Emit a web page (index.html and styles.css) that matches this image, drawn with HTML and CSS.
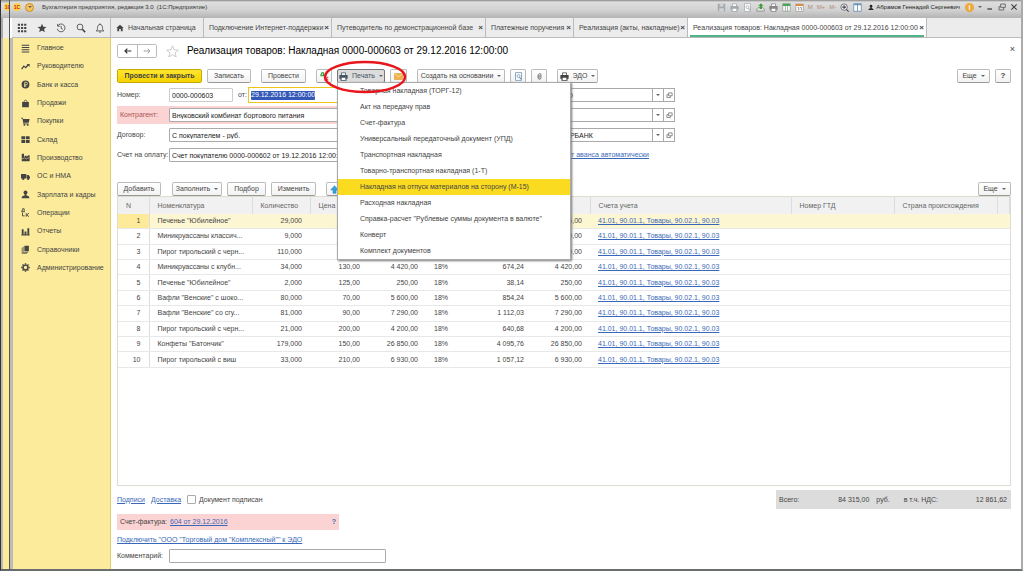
FILE: index.html
```html
<!DOCTYPE html>
<html lang="ru">
<head>
    <meta charset="UTF-8">
    <title>Бухгалтерия предприятия, редакция 3.0</title>
    <link rel="stylesheet" href="styles.css">
</head>
<body>
    <!-- иконки -->
    <svg class="sprite" width="0" height="0">
        <symbol id="i-grid" viewBox="0 0 12 12"><path d="M1 1h2.6v2.4H1zM4.8 1h2.6v2.4H4.800zM8.600 1h2.600v2.400H8.600zM1 4.800h2.600v2.400H1zM4.800 4.800h2.600v2.400H4.800zM8.600 4.800h2.600v2.400H8.600zM1 8.600h2.600V11H1zM4.800 8.600h2.600V11H4.800zM8.600 8.600h2.600V11H8.600z"/></symbol>
        <symbol id="i-star" viewBox="0 0 12 12"><path d="M6 .8l1.500 3.600 3.900.3-3 2.500 1 3.800L6 9l-3.400 2 1-3.800-3-2.500 3.900-.3z"/></symbol>
        <symbol id="i-history" viewBox="0 0 12 12"><path d="M2 3.500A4.700 4.700 0 1 1 1.500 7M2 1v2.800h2.600M6.200 3.500v3l2 1" fill="none" stroke="currentColor"/></symbol>
        <symbol id="i-search" viewBox="0 0 12 12"><circle cx="4.800" cy="4.800" r="3.500" fill="none" stroke="currentColor"/><path d="M7.500 7.500l3.500 3.500" stroke="currentColor" stroke-width="2"/></symbol>
        <symbol id="i-bell" viewBox="0 0 12 12"><path d="M1.500 9.500c1.500-1 1.500-2 1.500-4 0-5 6-5 6 0 0 2 0 3 1.500 4zM4.800 10.500q1.200 1.500 2.400 0M6 .5V2" fill="none" stroke="currentColor"/></symbol>
        <symbol id="i-home" viewBox="0 0 12 12"><path d="M6 1l5.500 5H10v5H7.300V7.500H4.700V11H2V6H.5z"/></symbol>
        <symbol id="i-list" viewBox="0 0 12 12"><path d="M1 1h10v1.200H1zM1 4h10v1.200H1zM1 7h10v1.200H1zM1 10h10v1.200H1z"/></symbol>
        <symbol id="i-trend" viewBox="0 0 12 12"><path d="M.8 9.500l3-4 2.500 2 3-3.500" fill="none" stroke="currentColor" stroke-width="1.700"/><path d="M7.500 2.500h4v4z"/></symbol>
        <symbol id="i-coin" viewBox="0 0 12 12"><circle cx="6" cy="6" r="5.200"/><path d="M5 9.500V3h1.800a1.700 1.700 0 0 1 0 3.500H4M4 8h3" fill="none" stroke="#fbeb9b"/></symbol>
        <symbol id="i-bag" viewBox="0 0 12 12"><path d="M1.500 4h9v7h-9z"/><path d="M4 5.500V2.800q2-2.600 4 0v2.700" fill="none" stroke="currentColor"/></symbol>
        <symbol id="i-cart" viewBox="0 0 12 12"><path d="M0 1h2.500l.5 1.500h8.500L10.300 7.500H4.200L4.400 8.500H10v1H3.500L1.800 2H0z"/><circle cx="4.500" cy="10.600" r="1.200"/><circle cx="9" cy="10.600" r="1.200"/></symbol>
        <symbol id="i-boxes" viewBox="0 0 12 12"><path d="M.5 1.500h5v4h-5zM6.500 1.500h5v4h-5zM.5 6.500h5v4h-5zM6.500 6.500h5v4h-5z"/></symbol>
        <symbol id="i-factory" viewBox="0 0 12 12"><path d="M1 1h3v4l3-2v2l3-2h1.500v8H1z"/><path d="M1 8l4-1.500 2 1.500 4-2" fill="none" stroke="#fbeb9b" stroke-width=".7"/></symbol>
        <symbol id="i-truck" viewBox="0 0 12 12"><path d="M0 2.500h7v6H0zM7.600 4H10l2 2.500v2H7.600z"/><circle cx="3" cy="9.300" r="1.500"/><circle cx="9.500" cy="9.300" r="1.500"/></symbol>
        <symbol id="i-person" viewBox="0 0 12 12"><circle cx="6" cy="3.300" r="2.600"/><path d="M4.800 5h2.400v2.300q4 .3 4 3.700H.8q0-3.400 4-3.700z"/></symbol>
        <symbol id="i-ops" viewBox="0 0 12 12"><path d="M1 5l1.200-4h2v4M.5 5h4.500M7 7v4.500M10.500 7L7.500 9.200l3 2.300M2 6.500v4h3" fill="none" stroke="currentColor" stroke-width="1.200"/></symbol>
        <symbol id="i-chart" viewBox="0 0 12 12"><path d="M1 3h2.500v8H1zM4.700 6h2.500v5H4.700zM8.500 1.500H11V11H8.500zM.5 10h11v1.200H.5z"/></symbol>
        <symbol id="i-books" viewBox="0 0 12 12"><path d="M4.500 1h6v7.500h-6z"/><path d="M3 2.300v7.700h6.300M1.500 3.600v7.900H8" fill="none" stroke="currentColor" stroke-width=".9"/></symbol>
        <symbol id="i-gear" viewBox="0 0 12 12"><circle cx="6" cy="6" r="3.200" fill="none" stroke="currentColor" stroke-width="1.900"/><path d="M6 .3v2M6 9.700v2M.3 6h2M9.700 6h2M2 2l1.400 1.400M8.600 8.600L10 10M2 10l1.400-1.400M8.600 3.400L10 2" stroke="currentColor" stroke-width="1.900"/></symbol>
        <symbol id="i-print" viewBox="0 0 12 12"><path d="M3 .8h6V4h2.500v5H10v2.500H2V9H.5V4H3z"/><path d="M4 1.800h4V4H4zM3.500 7.500h5v3h-5z" fill="#fff"/></symbol>
        <symbol id="i-open" viewBox="0 0 12 12"><path d="M4.500 1.500h6v5h-6zM4 4.500H1.500v5h6V7" fill="none" stroke="currentColor"/></symbol>
        <symbol id="i-disk" viewBox="0 0 12 12"><path d="M1 1h10v10H1z"/><path d="M3.500 1h5v3.500h-5zM3 7h6v4H3z" fill="#cfd3d6"/></symbol>
        <symbol id="i-preview" viewBox="0 0 12 12"><path d="M2 .8h8v10.400H2z" fill="#fff" stroke="currentColor"/><circle cx="6" cy="5.500" r="2" fill="none" stroke="currentColor"/><path d="M7.300 7l2 2.500" stroke="currentColor" stroke-width="1.500"/></symbol>
        <symbol id="i-calendar" viewBox="0 0 12 12"><path d="M1 1.500h10V11H1z" fill="#fff" stroke="#999"/><path d="M1 1.500h10V4H1z" fill="#d98a3d"/><path d="M3.500 6H5v3.500M7 6h1.500v3.500" fill="none" stroke="#777"/></symbol>
        <symbol id="i-calc" viewBox="0 0 12 12"><path d="M1 1h10v10H1z" fill="#fff" stroke="#8b9b8b"/><path d="M1 1h10v3H1z" fill="#4aa657"/><path d="M4.500 4v7M7.500 4v7" stroke="#8b9b8b"/></symbol>
        <symbol id="i-zoom" viewBox="0 0 12 12"><circle cx="5.500" cy="5.500" r="4.300" fill="#eef" stroke="#555"/><path d="M5.500 3v5M3 5.500h5M8.500 8.500l3 3" stroke="#444" stroke-width="1.400"/></symbol>
        <symbol id="i-panels" viewBox="0 0 12 12"><path d="M1 1h10v10H1z" fill="#fff" stroke="#5c86a8"/><path d="M1 1h10v2H1z" fill="#6b9bc2"/><path d="M6 1v10" stroke="#5c86a8"/></symbol>
        <symbol id="i-send" viewBox="0 0 12 12"><path d="M1 8l2-2h6l2 2v3H1z" fill="#ddd" stroke="#888"/><path d="M5 8V4H3l3.500-3.800L10 4H8v4z" fill="#40a03c"/></symbol>
        <symbol id="i-clip" viewBox="0 0 12 12"><path d="M4 3.500v5q2 3 4 0V3q-1.500-2.500-3 0v4.500q1 1.500 1.700 0V3.500" fill="none" stroke="currentColor" stroke-width=".8"/></symbol>
    </svg>

    <!-- край окна, лежащего позади -->
    <div class="back-window">
        <div class="back-title"><span class="logo">1С</span></div>
        <div class="back-tabs"></div>
        <div class="back-side"></div>
    </div>

    <div class="window">
        <header class="titlebar">
            <span class="logo">1С</span>
            <button class="round" aria-label="Меню"><span class="caret"></span></button>
            <span class="app-title">Бухгалтерия предприятия, редакция 3.0 &nbsp;(1С:Предприятие)</span>
            <div class="title-tools">
                <svg class="pale"><use href="#i-disk"/></svg>
                <svg class="pale"><use href="#i-print"/></svg>
                <svg class="pale"><use href="#i-preview"/></svg>
                <svg><use href="#i-send"/></svg>
                <svg class="dim"><use href="#i-print"/></svg>
                <svg><use href="#i-calc"/></svg>
                <svg><use href="#i-calendar"/></svg>
                <span class="mem">M</span><span class="mem">M+</span><span class="mem">M-</span>
                <svg><use href="#i-zoom"/></svg>
                <svg><use href="#i-panels"/></svg>
            </div>
            <span class="user"><svg><use href="#i-person"/></svg>Абрамов Геннадий Сергеевич</span>
            <div class="win-buttons">
                <span class="info">i</span>
                <span class="caret"></span>
                <svg viewBox="0 0 12 12"><path d="M2 9h7" stroke="#444" stroke-width="2"/></svg>
                <svg viewBox="0 0 12 12"><path d="M4 1.500h7v5H4zM8.500 6.500v4h-7v-5H4" fill="none" stroke="#555" stroke-width="1.200"/></svg>
                <svg viewBox="0 0 12 12"><path d="M2 2l8 8M10 2l-8 8" stroke="#444" stroke-width="1.800"/></svg>
            </div>
        </header>

        <nav class="tabbar">
            <div class="tab-tools">
                <svg><use href="#i-grid"/></svg>
                <svg><use href="#i-star"/></svg>
                <svg><use href="#i-history"/></svg>
                <svg><use href="#i-search"/></svg>
                <svg><use href="#i-bell"/></svg>
            </div>
            <a href="#" class="tab home"><svg><use href="#i-home"/></svg>Начальная страница</a>
            <a href="#" class="tab t1">Подключение Интернет-поддержки<b>×</b></a>
            <a href="#" class="tab t2">Путеводитель по демонстрационной базе<b>×</b></a>
            <a href="#" class="tab t3">Платежные поручения<b>×</b></a>
            <a href="#" class="tab t4">Реализация (акты, накладные)<b>×</b></a>
            <a href="#" class="tab t5 active">Реализация товаров: Накладная 0000-000603 от 29.12.2016 12:00:00<b>×</b></a>
        </nav>

        <div class="main">
            <nav class="sidebar">
                <a href="#"><svg><use href="#i-list"/></svg>Главное</a>
                <a href="#"><svg><use href="#i-trend"/></svg>Руководителю</a>
                <a href="#"><svg><use href="#i-coin"/></svg>Банк и касса</a>
                <a href="#"><svg><use href="#i-bag"/></svg>Продажи</a>
                <a href="#"><svg><use href="#i-cart"/></svg>Покупки</a>
                <a href="#"><svg><use href="#i-boxes"/></svg>Склад</a>
                <a href="#"><svg><use href="#i-factory"/></svg>Производство</a>
                <a href="#"><svg><use href="#i-truck"/></svg>ОС и НМА</a>
                <a href="#"><svg><use href="#i-person"/></svg>Зарплата и кадры</a>
                <a href="#"><svg><use href="#i-ops"/></svg>Операции</a>
                <a href="#"><svg><use href="#i-chart"/></svg>Отчеты</a>
                <a href="#"><svg><use href="#i-books"/></svg>Справочники</a>
                <a href="#"><svg><use href="#i-gear"/></svg>Администрирование</a>
            </nav>

            <main class="doc">
                <div class="doc-head">
                    <div class="nav-pair">
                        <button aria-label="Назад"><svg viewBox="0 0 12 12"><path d="M11 6H2M5 2.500L1.500 6 5 9.500" fill="none" stroke="#333" stroke-width="1.800"/></svg></button>
                        <button aria-label="Вперед"><svg viewBox="0 0 12 12"><path d="M1 6h9M7 2.500L10.500 6 7 9.500" fill="none" stroke="#999" stroke-width="1.400"/></svg></button>
                    </div>
                    <svg class="fav" viewBox="0 0 12 12"><path d="M6 .8l1.500 3.600 3.900.3-3 2.500 1 3.800L6 9l-3.400 2 1-3.800-3-2.500 3.900-.3z" fill="#fff" stroke="#bbb" stroke-width=".7"/></svg>
                    <h1>Реализация товаров: Накладная 0000-000603 от 29.12.2016 12:00:00</h1>
                    <button class="close" aria-label="Закрыть">×</button>
                </div>

                <div class="toolbar">
                    <button class="btn primary">Провести и закрыть</button>
                    <button class="btn w-save">Записать</button>
                    <button class="btn w-post">Провести</button>
                    <button class="btn icon" aria-label="Дт/Кт"><svg viewBox="0 0 12 12"><path d="M1 5l1.500-4h2v4M.5 5h5" fill="none" stroke="#2a9a35" stroke-width="1.500"/><path d="M7 6v5.500M11 6.500L8 8.700l3 2.500" fill="none" stroke="#e0403a" stroke-width="1.500"/></svg></button>
                    <div class="print">
                        <button class="btn pressed"><svg><use href="#i-print"/></svg>Печать<span class="caret"></span></button>
                        <ul class="menu">
                            <li>Товарная накладная (ТОРГ-12)</li>
                            <li>Акт на передачу прав</li>
                            <li>Счет-фактура</li>
                            <li>Универсальный передаточный документ (УПД)</li>
                            <li>Транспортная накладная</li>
                            <li>Товарно-транспортная накладная (1-Т)</li>
                            <li class="selected">Накладная на отпуск материалов на сторону (М-15)</li>
                            <li>Расходная накладная</li>
                            <li>Справка-расчет "Рублевые суммы документа в валюте"</li>
                            <li>Конверт</li>
                            <li>Комплект документов</li>
                        </ul>
                        <svg class="mark" viewBox="0 0 84 34"><ellipse cx="42" cy="17" rx="40" ry="15"/></svg>
                    </div>
                    <button class="btn icon mail" aria-label="Отправить"><svg viewBox="0 0 12 12"><path d="M.5 2h11v8H.5z" fill="#f0b043" stroke="#c98a22" stroke-width=".6"/><path d="M.5 2L6 6.500 11.500 2" fill="none" stroke="#fff2c8"/></svg></button>
                    <button class="btn w-create">Создать на основании<span class="caret"></span></button>
                    <button class="btn icon" aria-label="Просмотр"><svg class="blue"><use href="#i-preview"/></svg></button>
                    <button class="btn icon" aria-label="Файлы"><svg><use href="#i-clip"/></svg></button>
                    <button class="btn w-edo"><svg><use href="#i-print"/></svg>ЭДО<span class="caret"></span></button>
                    <button class="btn more">Еще<span class="caret"></span></button>
                    <button class="btn icon help">?</button>
                </div>

                <form class="fields">
                    <div class="row">
                        <label for="num">Номер:</label>
                        <input id="num" class="num" value="0000-000603">
                        <label for="date" class="from">от:</label>
                        <span class="date-box"><input id="date" class="date" value="29.12.2016 12:00:00"></span>
                        <label for="org" class="second">Организация:</label>
                        <span class="pick"><input id="org" value="Торговый дом Комплексный, АО"><button type="button" aria-label="Список"><i class="caret"></i></button><button type="button" aria-label="Открыть"><svg><use href="#i-open"/></svg></button></span>
                    </div>
                    <div class="row">
                        <div class="required"><label for="agent">Контрагент:</label><input id="agent" value="Внуковский комбинат бортового питания"></div>
                        <label for="store" class="second">Склад:</label>
                        <span class="pick"><input id="store" value="Основной склад"><button type="button" aria-label="Список"><i class="caret"></i></button><button type="button" aria-label="Открыть"><svg><use href="#i-open"/></svg></button></span>
                    </div>
                    <div class="row">
                        <label for="deal">Договор:</label>
                        <input id="deal" class="wide" value="С покупателем - руб.">
                        <label for="bank" class="second">Банковский счет:</label>
                        <span class="pick"><input id="bank" value="Расчетный счет, банк ПАО СБЕРБАНК"><button type="button" aria-label="Список"><i class="caret"></i></button><button type="button" aria-label="Открыть"><svg><use href="#i-open"/></svg></button></span>
                    </div>
                    <div class="row">
                        <label for="bill">Счет на оплату:</label>
                        <input id="bill" class="wide" value="Счет покупателю 0000-000602 от 19.12.2016 12:00:00">
                        <span class="second">Расчеты:</span>
                        <a href="#">Срок 31.12.16, 62.01, 62.02, зачет аванса автоматически</a>
                    </div>
                </form>

                <div class="toolbar table-tools">
                    <button class="btn w-add">Добавить</button>
                    <button class="btn w-fill">Заполнить<span class="caret"></span></button>
                    <button class="btn w-pick">Подбор</button>
                    <button class="btn w-edit">Изменить</button>
                    <button class="btn icon up" aria-label="Вверх"><svg viewBox="0 0 12 12"><path d="M6 1l5 5.500H8V11H4V6.500H1z" fill="#36a3e0" stroke="#1b78b5" stroke-width=".7"/></svg></button>
                    <button class="btn more">Еще<span class="caret"></span></button>
                </div>

                <div class="table-box">
                    <table>
                        <colgroup>
                            <col class="c-n"><col class="c-item"><col class="c-num"><col class="c-num"><col class="c-num"><col class="c-rate"><col class="c-num"><col class="c-num"><col class="c-acc"><col class="c-gtd"><col class="c-gtd"><col>
                        </colgroup>
                        <thead>
                            <tr><th>N</th><th>Номенклатура</th><th>Количество</th><th>Цена</th><th>Сумма</th><th>% НДС</th><th>НДС</th><th>Всего</th><th>Счета учета</th><th>Номер ГТД</th><th>Страна происхождения</th><th></th></tr>
                        </thead>
                        <tbody>
                            <tr class="current"><td>1</td><td>Печенье "Юбилейное"</td><td>29,000</td><td>75,00</td><td>2 175,00</td><td>18%</td><td>331,78</td><td>2 175,00</td><td><a href="#">41.01, 90.01.1, Товары, 90.02.1, 90.03</a></td><td></td><td></td><td></td></tr>
                            <tr><td>2</td><td>Миникруассаны классич...</td><td>9,000</td><td>450,00</td><td>4 050,00</td><td>18%</td><td>617,80</td><td>4 050,00</td><td><a href="#">41.01, 90.01.1, Товары, 90.02.1, 90.03</a></td><td></td><td></td><td></td></tr>
                            <tr><td>3</td><td>Пирог тирольский с черн...</td><td>110,000</td><td>205,00</td><td>22 550,00</td><td>18%</td><td>3 439,83</td><td>22 550,00</td><td><a href="#">41.01, 90.01.1, Товары, 90.02.1, 90.03</a></td><td></td><td></td><td></td></tr>
                            <tr><td>4</td><td>Миникруассаны с клубн...</td><td>34,000</td><td>130,00</td><td>4 420,00</td><td>18%</td><td>674,24</td><td>4 420,00</td><td><a href="#">41.01, 90.01.1, Товары, 90.02.1, 90.03</a></td><td></td><td></td><td></td></tr>
                            <tr><td>5</td><td>Печенье "Юбилейное"</td><td>2,000</td><td>125,00</td><td>250,00</td><td>18%</td><td>38,14</td><td>250,00</td><td><a href="#">41.01, 90.01.1, Товары, 90.02.1, 90.03</a></td><td></td><td></td><td></td></tr>
                            <tr><td>6</td><td>Вафли "Венские" с шоко...</td><td>80,000</td><td>70,00</td><td>5 600,00</td><td>18%</td><td>854,24</td><td>5 600,00</td><td><a href="#">41.01, 90.01.1, Товары, 90.02.1, 90.03</a></td><td></td><td></td><td></td></tr>
                            <tr><td>7</td><td>Вафли "Венские" со сгу...</td><td>81,000</td><td>90,00</td><td>7 290,00</td><td>18%</td><td>1 112,03</td><td>7 290,00</td><td><a href="#">41.01, 90.01.1, Товары, 90.02.1, 90.03</a></td><td></td><td></td><td></td></tr>
                            <tr><td>8</td><td>Пирог тирольский с черн...</td><td>21,000</td><td>200,00</td><td>4 200,00</td><td>18%</td><td>640,68</td><td>4 200,00</td><td><a href="#">41.01, 90.01.1, Товары, 90.02.1, 90.03</a></td><td></td><td></td><td></td></tr>
                            <tr><td>9</td><td>Конфеты "Батончик"</td><td>179,000</td><td>150,00</td><td>26 850,00</td><td>18%</td><td>4 095,76</td><td>26 850,00</td><td><a href="#">41.01, 90.01.1, Товары, 90.02.1, 90.03</a></td><td></td><td></td><td></td></tr>
                            <tr><td>10</td><td>Пирог тирольский с виш</td><td>33,000</td><td>210,00</td><td>6 930,00</td><td>18%</td><td>1 057,12</td><td>6 930,00</td><td><a href="#">41.01, 90.01.1, Товары, 90.02.1, 90.03</a></td><td></td><td></td><td></td></tr>
                        </tbody>
                    </table>
                </div>

                <footer class="bottom">
                    <div class="links">
                        <a href="#">Подписи</a>
                        <a href="#">Доставка</a>
                        <label class="signed"><input type="checkbox">Документ подписан</label>
                        <div class="totals">
                            <span>Всего:</span><span class="sum">84 315,00</span><span class="cur">руб.</span><span class="vat-label">в т.ч. НДС:</span><span class="vat">12 861,62</span>
                        </div>
                    </div>
                    <div class="invoice">
                        <span>Счет-фактура:</span>
                        <a href="#">604 от 29.12.2016</a>
                        <a href="#" class="q">?</a>
                    </div>
                    <a href="#" class="edo-link">Подключить "ООО "Торговый дом "Комплексный"" к ЭДО</a>
                    <div class="comment">
                        <label for="comment">Комментарий:</label>
                        <input id="comment">
                    </div>
                </footer>
            </main>
        </div>
    </div>
</body>
</html>
```

FILE: styles.css
```css
* {
    box-sizing: border-box;
}

body {
    margin: 0;
    padding-bottom: 2px;
    height: 100vh;
    display: flex;
    font-family: "Liberation Sans", Arial, sans-serif;
    font-size: 7px;
    line-height: 10px;
    color: #444;
    background: #fff;
    overflow: hidden;
}

a {
    color: #3a68b8;
}

button, input {
    font: inherit;
    color: inherit;
    margin: 0;
    padding: 0;
}

svg {
    width: 9px;
    height: 9px;
    flex: none;
    fill: currentColor;
}

.sprite {
    position: absolute;
}

.caret {
    display: inline-block;
    border: 2px solid transparent;
    border-top-color: #666;
    border-bottom: 0;
}

.logo {
    width: 8px;
    height: 8px;
    flex: none;
    border-radius: 50%;
    background: #fbd648;
    color: #d8231c;
    font-size: 5px;
    font-weight: bold;
    line-height: 8px;
    text-align: center;
    overflow: hidden;
}

/* заднее окно */
.back-window {
    width: 9px;
    flex: none;
    display: flex;
    flex-direction: column;
    border-left: 1px solid #333;
    border-bottom: 2px solid #666;
}

.back-title {
    height: 18px;
    padding: 3px 0 0 3px;
    display: flex;
    overflow: hidden;
    background: linear-gradient(#888, #dedede 3px, #d2d2d2 12px, #b4b4b4);
}

.back-tabs {
    height: 20px;
    border-left: 2px solid #aaa;
    background: #ececec;
}

.back-side {
    flex: 1;
    border-left: 2px solid #bbb;
    background: #fbeb9b;
}

/* окно */
.window {
    flex: 1;
    min-width: 0;
    display: flex;
    flex-direction: column;
    border-left: 1px solid #555;
    border-right: 2px solid #aaa;
    border-bottom: 2px solid #6a6e6e;
}

.titlebar {
    height: 18px;
    flex: none;
    display: flex;
    align-items: center;
    padding: 0 3px 4px 3px;
    background: linear-gradient(#888, #dedede 2px, #d2d2d2 10px, #b4b4b4);
}

.round {
    width: 9px;
    height: 9px;
    margin-left: 4px;
    border: 1px solid #c98f25;
    border-radius: 50%;
    background: #f6c25c;
    display: flex;
    align-items: center;
    justify-content: center;
}

.app-title {
    margin-left: 8px;
    font-size: 6px;
    color: #333;
    white-space: pre;
}

.title-tools {
    margin-left: auto;
    display: flex;
    align-items: center;
    gap: 4px;
}

.pale {
    color: #a3a9ae;
}

.dim {
    color: #888;
}

.mem {
    color: #b08c7c;
    font-size: 6px;
}

.user {
    margin-left: 6px;
    display: flex;
    align-items: center;
    gap: 2px;
    font-size: 6px;
    color: #222;
    white-space: nowrap;
}

.user svg {
    width: 6px;
    height: 7px;
}

.win-buttons {
    margin-left: 5px;
    display: flex;
    align-items: center;
    gap: 4px;
}

.win-buttons svg {
    width: 8px;
    height: 8px;
}

.info {
    width: 9px;
    height: 9px;
    border-radius: 50%;
    background: #eda93c;
    color: #fff;
    font-weight: bold;
    line-height: 9px;
    text-align: center;
}

/* вкладки */
.tabbar {
    height: 20px;
    flex: none;
    display: flex;
    margin-left: 2px;
    border-bottom: 1px solid #bbb;
    background: #ececec;
}

.tab-tools {
    width: 98px;
    flex: none;
    display: flex;
    align-items: center;
    justify-content: space-between;
    padding: 0 5px;
}

.tab-tools svg {
    width: 10px;
    height: 10px;
}

.tab {
    flex: none;
    display: flex;
    align-items: center;
    padding: 0 2px 0 5px;
    border-left: 1px solid #bbb;
    color: #444;
    text-decoration: none;
    white-space: nowrap;
}

.tab b {
    margin-left: auto;
    font-size: 8px;
}

.home {
    width: 93px;
    gap: 4px;
}

.home svg {
    width: 8px;
    height: 8px;
}

.t1 {
    width: 128px;
}

.t2 {
    width: 154px;
}

.t3 {
    width: 88px;
}

.t4 {
    width: 114px;
}

.t5 {
    width: 240px;
}

.active {
    background: #fff linear-gradient(#4fb387, #4fb387) center 17px / calc(100% - 4px) 2px no-repeat;
    border-right: 1px solid #bbb;
}

.main {
    flex: 1;
    min-height: 0;
    display: flex;
}

.sidebar {
    width: 101px;
    flex: none;
    padding-top: 1px;
    border-left: 3px solid #bbb;
    border-right: 1px solid #e0cc70;
    background: #fbeb9b;
    display: grid;
    grid-template-rows: repeat(13, 1fr);
    padding-bottom: calc(100vh - 281px);
}

.sidebar a {
    display: flex;
    align-items: center;
    gap: 7px;
    padding-left: 8px;
    color: #444;
    text-decoration: none;
}

/* документ */
.doc {
    flex: 1;
    min-width: 0;
    padding: 6px 10px 6px 6px;
    display: flex;
    flex-direction: column;
}

.doc-head {
    height: 14px;
    display: flex;
    align-items: center;
}

.nav-pair {
    display: flex;
    border: 1px solid #bbb;
    border-radius: 2px;
}

.nav-pair button {
    width: 19px;
    height: 12px;
    border: 0;
    background: #fff;
    display: flex;
    align-items: center;
    justify-content: center;
}

.nav-pair button + button {
    border-left: 1px solid #bbb;
}

.nav-pair svg {
    width: 8px;
    height: 8px;
}

.fav {
    width: 13px;
    height: 13px;
    margin: 0 8px 0 9px;
}

h1 {
    margin: 0;
    font-size: 10px;
    font-weight: normal;
    color: #000;
}

.close {
    margin: 0 -4px 4px auto;
    border: 0;
    background: none;
    font-size: 9px;
}

.toolbar {
    height: 14px;
    margin-top: 11px;
    display: flex;
}

.btn {
    height: 14px;
    border: 1px solid #bbb;
    border-bottom-color: #999;
    border-radius: 2px;
    background: linear-gradient(#fff, #f2f2f2);
    display: flex;
    align-items: center;
    justify-content: center;
    gap: 4px;
    white-space: nowrap;
}

.primary {
    width: 85px;
    border-color: #c9ab00;
    background: linear-gradient(#ffe62e, #f5d300);
    font-weight: bold;
}

.w-save {
    width: 44px;
    margin-left: 5px;
}

.w-post {
    width: 45px;
    margin-left: 10px;
}

.icon {
    width: 16px;
    margin-left: 5px;
}

.w-post + .icon {
    margin-left: 10px;
}

.print {
    position: relative;
    margin-left: 5px;
}

.pressed {
    width: 48px;
    border-color: #777;
    background: #dcdcdc;
    color: #456;
}

.mail {
    width: 17px;
}

.blue {
    color: #6790b0;
}

.w-create {
    width: 88px;
    margin-left: 10px;
}

.w-edo {
    width: 41px;
    margin-left: 10px;
}

.more {
    width: 33px;
    margin-left: auto;
}

.help {
    font-size: 8px;
    font-weight: bold;
}

/* меню печати */
.menu {
    position: absolute;
    z-index: 2;
    top: 13px;
    left: 0;
    width: 234px;
    margin: 0;
    padding: 0;
    list-style: none;
    border: 1px solid #aaa;
    background: #fff;
    box-shadow: 1px 1px 2px #777;
}

.menu li {
    height: 16px;
    padding-left: 22px;
    line-height: 16px;
    white-space: nowrap;
}

.menu .selected {
    background: #fadb1f;
}

.mark {
    position: absolute;
    z-index: 3;
    top: -9px;
    left: -14px;
    width: 84px;
    height: 34px;
    fill: none;
    stroke: #e8151c;
    stroke-width: 2.5;
    pointer-events: none;
}

/* реквизиты */
.fields {
    margin-top: 2px;
}

.row {
    height: 20px;
    display: flex;
    align-items: center;
    white-space: nowrap;
}

.row > label:first-child, .comment label {
    width: 52px;
    flex: none;
}

.row input, .comment input {
    height: 14px;
    padding: 0 2px;
    border: 1px solid #aaa;
    border-radius: 1px;
    background: #fff;
    color: #222;
}

.row .num {
    width: 64px;
    border-color: #ccc;
}

.from {
    width: 15px;
    padding-left: 5px;
}

.date-box {
    width: 100px;
    height: 16px;
    display: flex;
    align-items: center;
    border: 1px solid #f0c419;
}

.row .date {
    width: 64px;
    height: 9px;
    margin-left: 2px;
    padding: 0;
    border: 0;
    background: #3358b8;
    color: #fff;
}

.required {
    width: 280px;
    height: 18px;
    display: flex;
    align-items: center;
    background: #fbd3d3;
}

.required label {
    width: 52px;
    padding-left: 3px;
    color: #a55;
}

.required input {
    width: 226px;
}

.row .wide {
    width: 226px;
}

.second {
    width: 56px;
    margin-left: auto;
}

.pick {
    width: 210px;
    margin-right: 336px;
    display: flex;
}

.pick input {
    flex: 1;
    min-width: 0;
}

.pick button {
    width: 12px;
    height: 14px;
    margin-left: -1px;
    border: 1px solid #aaa;
    background: #fff;
    display: flex;
    align-items: center;
    justify-content: center;
}

.pick svg {
    width: 7px;
    height: 7px;
}

.row > a {
    width: 210px;
    margin-right: 336px;
}

.table-tools {
    margin-top: 17px;
}

.w-add {
    width: 44px;
}

.w-fill {
    width: 50px;
    margin-left: 11px;
}

.w-pick {
    width: 39px;
    margin-left: 5px;
}

.w-edit {
    width: 45px;
    margin-left: 5px;
}

.up {
    margin-left: 10px;
}

/* табличная часть */
.table-box {
    flex: 1;
    min-height: 0;
    border: 1px solid #dcdccf;
}

table {
    width: 100%;
    height: 171px;
    table-layout: fixed;
    border-collapse: collapse;
}

.c-n {
    width: 31px;
}

.c-item {
    width: 103px;
}

.c-num {
    width: 58px;
}

.c-rate {
    width: 48px;
}

.c-acc {
    width: 201px;
}

.c-gtd {
    width: 103px;
}

th {
    height: 17px;
    padding: 0 8px;
    border-right: 1px solid #ddd;
    background: #f1f1f1;
    color: #666;
    font-weight: normal;
    text-align: left;
    white-space: nowrap;
}

td {
    padding: 0 8px;
    border-bottom: 1px solid #e8e8e8;
    text-align: right;
    white-space: nowrap;
}

td:first-child {
    border-right: 1px solid #ddd;
}

td:nth-child(2), td:nth-child(6), td:nth-child(9) {
    text-align: left;
}

.current td {
    background: #fdf6d2;
}

.current td:first-child {
    background: #fdeb9a;
}

/* подвал */
.links {
    height: 19px;
    margin-top: 4px;
    display: flex;
    align-items: center;
    gap: 6px;
}

.signed {
    display: flex;
    align-items: center;
    gap: 3px;
}

.signed input {
    appearance: none;
    width: 9px;
    height: 9px;
    border: 1px solid #aaa;
    border-radius: 1px;
}

.totals {
    width: 235px;
    height: 19px;
    margin-left: auto;
    padding: 0 4px 0 3px;
    display: flex;
    align-items: center;
    background: #dcdcdc;
}

.sum {
    width: 70px;
    text-align: right;
}

.cur {
    margin-left: 7px;
}

.vat-label {
    margin-left: 14px;
}

.vat {
    margin-left: auto;
}

.invoice {
    width: 222px;
    height: 16px;
    margin-top: 5px;
    padding: 0 3px;
    display: flex;
    align-items: center;
    background: #fbd3d3;
}

.invoice span {
    width: 50px;
}

.q {
    margin-left: auto;
    font-weight: bold;
    text-decoration: none;
}

.edo-link {
    display: block;
    margin: 5px 0 4px;
}

.comment {
    display: flex;
    align-items: center;
}

.comment input {
    width: 217px;
}
```
